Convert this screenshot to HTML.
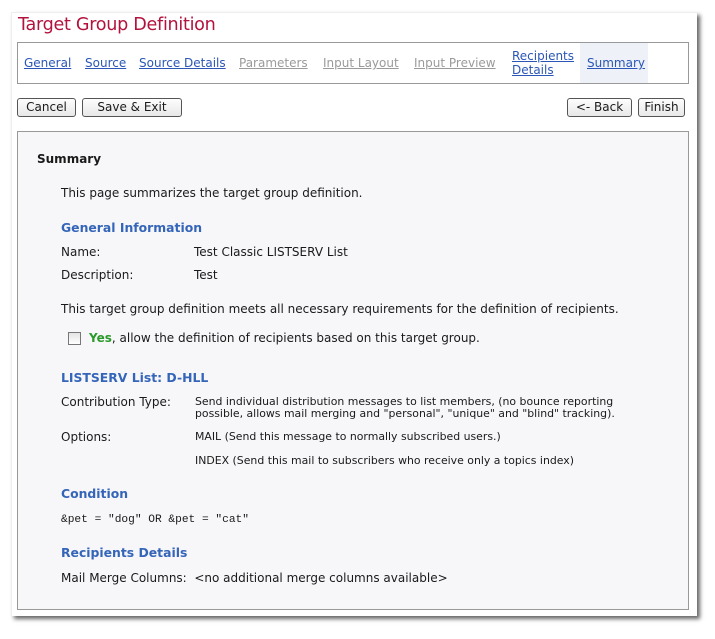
<!DOCTYPE html>
<html><head><meta charset="utf-8"><style>
*{margin:0;padding:0;box-sizing:border-box}
body{width:715px;height:639px;background:#fff;position:relative;overflow:hidden;font-family:"DejaVu Sans",Verdana,sans-serif;font-size:12px;color:#1a1a1a}
.card{position:absolute;left:11px;top:12px;width:686px;height:604px;background:#fff;box-shadow:3px 3px 4px #666;border-top:1px solid #eee;border-left:1px solid #eee}
.a{position:absolute;white-space:nowrap;line-height:14px}
.t{position:absolute;left:18px;top:15px;font-size:17.6px;color:#b3123d;font-family:"DejaVu Sans",sans-serif;letter-spacing:-0.3px}
.tabs{position:absolute;left:17px;top:42px;width:672px;height:42px;border:1px solid #999;background:#fff}
.tab{position:absolute;top:13px;font-size:12px;text-decoration:underline;white-space:nowrap}
.on{color:#2a56b5}.off{color:#9a9a9a}
.btn{position:absolute;top:98px;height:19px;border:1px solid #555;border-radius:3px;background:linear-gradient(#fdfdfd,#e8e8e8);font-size:12px;text-align:center;line-height:17px}
.panel{position:absolute;left:17px;top:131px;width:672px;height:479px;background:#f7f7fa;border:1px solid #999}
.h{color:#3465b8;font-weight:bold;font-size:12.4px}
.s{font-size:10.9px;line-height:11.5px}
</style></head><body>
<div class="card"></div>
<div class="t">Target Group Definition</div>
<div class="tabs">
<div style="position:absolute;left:562px;top:0;width:68px;height:40px;background:#eef2f8"></div>
<span class="tab on" style="left:6px">General</span>
<span class="tab on" style="left:67px">Source</span>
<span class="tab on" style="left:121px">Source Details</span>
<span class="tab off" style="left:221px">Parameters</span>
<span class="tab off" style="left:305px">Input Layout</span>
<span class="tab off" style="left:396px">Input Preview</span>
<span class="tab on" style="left:494px;top:6px;line-height:14px">Recipients<br>Details</span>
<span class="tab on" style="left:569px">Summary</span>
</div>
<div class="btn" style="left:17px;width:59px">Cancel</div>
<div class="btn" style="left:82px;width:100px">Save &amp; Exit</div>
<div class="btn" style="left:567px;width:65px">&lt;- Back</div>
<div class="btn" style="left:638px;width:47px">Finish</div>
<div class="panel"></div>
<div class="a" style="left:37px;top:152px;font-weight:bold">Summary</div>
<div class="a" style="left:61px;top:186px">This page summarizes the target group definition.</div>
<div class="a h" style="left:61px;top:221px">General Information</div>
<div class="a" style="left:61px;top:245px">Name:</div>
<div class="a" style="left:194px;top:245px">Test Classic LISTSERV List</div>
<div class="a" style="left:61px;top:268px">Description:</div>
<div class="a" style="left:194px;top:268px">Test</div>
<div class="a" style="left:61px;top:302px">This target group definition meets all necessary requirements for the definition of recipients.</div>
<div style="position:absolute;left:68px;top:332px;width:13px;height:13px;border:1px solid #777;background:linear-gradient(#e4e4e4,#fff)"></div>
<div class="a" style="left:89px;top:331px"><b style="color:#2a9a2a">Yes</b>, allow the definition of recipients based on this target group.</div>
<div class="a h" style="left:61px;top:371px">LISTSERV List: D-HLL</div>
<div class="a" style="left:61px;top:395px">Contribution Type:</div>
<div class="a s" style="left:195px;top:396px">Send individual distribution messages to list members, (no bounce reporting<br>possible, allows mail merging and "personal", "unique" and "blind" tracking).</div>
<div class="a" style="left:61px;top:430px">Options:</div>
<div class="a s" style="left:195px;top:431px">MAIL (Send this message to normally subscribed users.)</div>
<div class="a s" style="left:195px;top:455px">INDEX (Send this mail to subscribers who receive only a topics index)</div>
<div class="a h" style="left:61px;top:487px">Condition</div>
<div class="a" style="left:61px;top:513px;font-family:'Liberation Mono',monospace;font-size:11.2px">&amp;pet = "dog" OR &amp;pet = "cat"</div>
<div class="a h" style="left:61px;top:546px">Recipients Details</div>
<div class="a" style="left:61px;top:571px">Mail Merge Columns:&nbsp; &lt;no additional merge columns available&gt;</div>
</body></html>
